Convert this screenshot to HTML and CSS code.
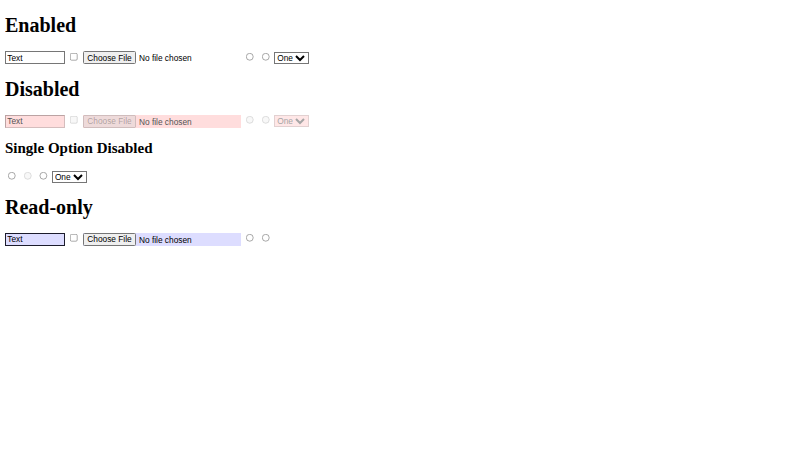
FILE: index.html
```html
<!DOCTYPE html>
<html>
<head>
<meta charset="utf-8">
<link rel="stylesheet" href="styles.css">
</head>
<body>
<h1 class="first">Enabled</h1>
<p class="row">
  <input type="text" class="txt" value="Text">
  <input type="checkbox">
  <input type="file" class="file">
  <input type="radio" name="a">
  <input type="radio" name="a">
  <select><option>One</option><option>Two</option></select>
</p>
<h1>Disabled</h1>
<p class="row">
  <input type="text" class="txt" value="Text" disabled>
  <input type="checkbox" disabled>
  <input type="file" class="file" disabled>
  <input type="radio" name="b" disabled>
  <input type="radio" name="b" disabled>
  <select disabled><option>One</option><option>Two</option></select>
</p>
<h2>Single Option Disabled</h2>
<p class="row">
  <input type="radio" name="c">
  <input type="radio" name="c" disabled>
  <input type="radio" name="c">
  <select><option>One</option><option disabled>Two</option></select>
</p>
<h1>Read-only</h1>
<p class="row">
  <input type="text" class="txt ro focus" value="Text" readonly>
  <input type="checkbox">
  <input type="file" class="file ro">
  <input type="radio" name="d">
  <input type="radio" name="d">
</p>
</body>
</html>
```
FILE: styles.css
```css
html {
  zoom: 0.625;
}
body {
  margin: 8px;
  width: max-content;
  font-family: "Liberation Serif", serif;
  background: #fff;
  color: #000;
}
.first {
  margin-top: 15px;
}
input, select, button {
  font-family: "Liberation Sans", Arial, sans-serif;
  font-size: 13.33px;
}
.txt {
  width: 96px;
  box-sizing: border-box;
}
input:disabled, select:disabled {
  background: #fdd;
}
input[type="checkbox"]:disabled, input[type="radio"]:disabled {
  background: transparent;
}
.ro {
  background: #ddf;
}
.focus {
  outline: none;
  border: 2px solid #1c1c2c;
}
```
